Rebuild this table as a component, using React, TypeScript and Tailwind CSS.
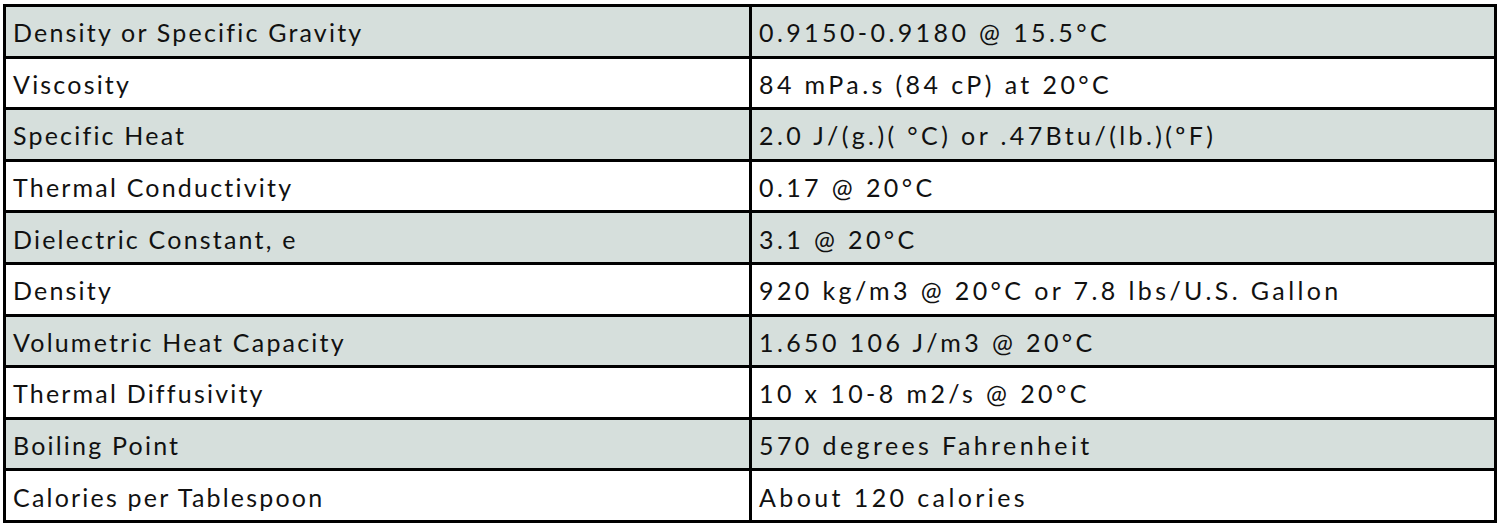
import React from "react";

const rows: [string, string][] = [
  ["Density or Specific Gravity", "0.9150-0.9180 @ 15.5°C"],
  ["Viscosity", "84 mPa.s (84 cP) at 20°C"],
  ["Specific Heat", "2.0 J/(g.)( °C) or .47Btu/(lb.)(ºF)"],
  ["Thermal Conductivity", "0.17 @ 20°C"],
  ["Dielectric Constant, e", "3.1 @ 20°C"],
  ["Density", "920 kg/m3 @ 20°C or 7.8 lbs/U.S. Gallon"],
  ["Volumetric Heat Capacity", "1.650 106 J/m3 @ 20°C"],
  ["Thermal Diffusivity", "10 x 10-8 m2/s @ 20°C"],
  ["Boiling Point", "570 degrees Fahrenheit"],
  ["Calories per Tablespoon", "About 120 calories"],
];

export default function App() {
  return (
    <div className="w-[1500px] h-[526px] bg-white pt-[4px] pl-[3px]" style={{ fontFamily: '"Lato", "Open Sans", sans-serif' }}>
      <table className="border-collapse w-[1494px] text-[25px] text-[#111] leading-none">
        <tbody>
          {rows.map(([a, b], i) => (
            <tr key={i} className={i % 2 === 0 ? "bg-[#d6dfdc]" : "bg-white"}>
              <td className="border-[3px] border-black h-[51.6px] w-[746px] pl-[7px] pt-[3px] align-middle tracking-[2.2px]">{a}</td>
              <td className="border-[3px] border-black h-[51.6px] pl-[7px] pt-[3px] align-middle tracking-[3.4px]">{b}</td>
            </tr>
          ))}
        </tbody>
      </table>
    </div>
  );
}
